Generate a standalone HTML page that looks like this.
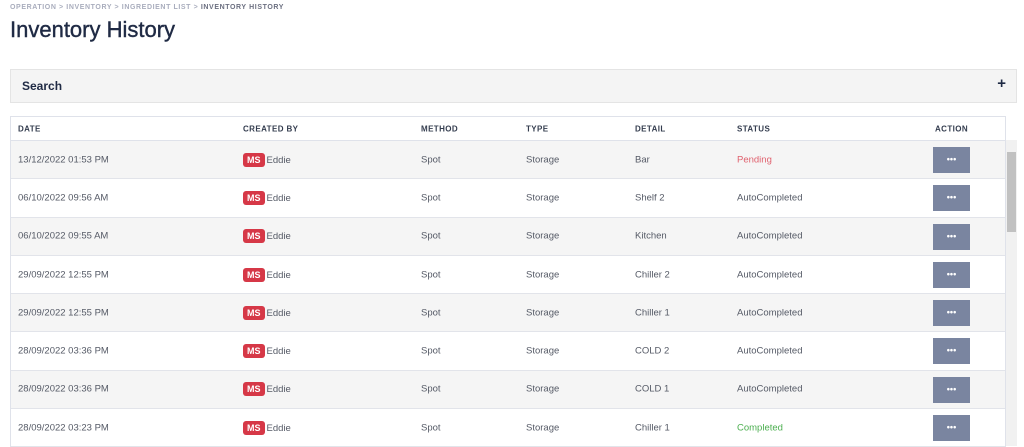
<!DOCTYPE html><html><head><style>
body{margin:0;width:1024px;height:446px;overflow:hidden;background:#fff;font-family:"Liberation Sans",sans-serif;color:#333;position:relative}
.bc{position:absolute;left:10px;top:4px;font-size:7px;font-weight:bold;letter-spacing:.6px;color:#a9adbd}
.bc b{color:#6b6f80}
h1{position:absolute;left:10px;top:17px;margin:0;font-size:22px;font-weight:normal;color:#1f2a44;-webkit-text-stroke:.4px #1f2a44}
.search{position:absolute;left:10px;top:69px;width:1005px;height:32px;background:#f4f4f4;border:1px solid #e4e4e4}
.search span{position:absolute;left:11px;top:9px;font-size:12px;font-weight:bold;color:#1f2a44}
.search i{position:absolute;right:10px;top:5px;font-style:normal;font-size:15px;font-weight:bold;color:#1f2a44}
.tbl{position:absolute;left:10px;top:116px;width:994px;border:1px solid #dfe2ea;border-bottom:none}
.hd{height:23px;border-bottom:1px solid #dfe2ea;position:relative;font-size:8px;font-weight:bold;letter-spacing:.4px;color:#333c4e}
.row{height:37.3px;border-bottom:1px solid #e2e4ea;position:relative;font-size:9.5px;color:#555a66}
.row:nth-child(even){background:#f5f5f5}
.c{position:absolute;top:50%;transform:translateY(-50%);white-space:nowrap}
.ms{display:inline-block;background:#d63847;color:#fff;font-weight:bold;font-size:9px;border-radius:3px;padding:2px 4px;margin-right:2px}
.btn{position:absolute;left:922px;top:6px;width:37px;height:26px;background:#7a85a0;color:#fff;font-size:9px;text-align:center;line-height:24px;font-weight:bold}
.sb{position:absolute;left:1006px;top:140px;width:11px;height:306px;background:#f1f1f1}
.sb div{position:absolute;left:1px;top:12px;width:9px;height:80px;background:#c1c1c1}
</style></head><body>
<div class="bc">OPERATION &gt; INVENTORY &gt; INGREDIENT LIST &gt; <b>INVENTORY HISTORY</b></div>
<h1>Inventory History</h1>
<div class="search"><span>Search</span><i>+</i></div>
<div class="tbl">
<div class="hd"><span class="c" style="left:7px">DATE</span><span class="c" style="left:232px">CREATED BY</span><span class="c" style="left:410px">METHOD</span><span class="c" style="left:515px">TYPE</span><span class="c" style="left:624px">DETAIL</span><span class="c" style="left:726px">STATUS</span><span class="c" style="left:924px">ACTION</span></div>
<div class="row"><span class="c" style="left:7px">13/12/2022 01:53 PM</span><span class="c" style="left:232px"><span class="ms">MS</span>Eddie</span><span class="c" style="left:410px">Spot</span><span class="c" style="left:515px">Storage</span><span class="c" style="left:624px">Bar</span><span class="c" style="left:726px;color:#e0626f">Pending</span><div class="btn">•••</div></div>
<div class="row"><span class="c" style="left:7px">06/10/2022 09:56 AM</span><span class="c" style="left:232px"><span class="ms">MS</span>Eddie</span><span class="c" style="left:410px">Spot</span><span class="c" style="left:515px">Storage</span><span class="c" style="left:624px">Shelf 2</span><span class="c" style="left:726px">AutoCompleted</span><div class="btn">•••</div></div>
<div class="row"><span class="c" style="left:7px">06/10/2022 09:55 AM</span><span class="c" style="left:232px"><span class="ms">MS</span>Eddie</span><span class="c" style="left:410px">Spot</span><span class="c" style="left:515px">Storage</span><span class="c" style="left:624px">Kitchen</span><span class="c" style="left:726px">AutoCompleted</span><div class="btn">•••</div></div>
<div class="row"><span class="c" style="left:7px">29/09/2022 12:55 PM</span><span class="c" style="left:232px"><span class="ms">MS</span>Eddie</span><span class="c" style="left:410px">Spot</span><span class="c" style="left:515px">Storage</span><span class="c" style="left:624px">Chiller 2</span><span class="c" style="left:726px">AutoCompleted</span><div class="btn">•••</div></div>
<div class="row"><span class="c" style="left:7px">29/09/2022 12:55 PM</span><span class="c" style="left:232px"><span class="ms">MS</span>Eddie</span><span class="c" style="left:410px">Spot</span><span class="c" style="left:515px">Storage</span><span class="c" style="left:624px">Chiller 1</span><span class="c" style="left:726px">AutoCompleted</span><div class="btn">•••</div></div>
<div class="row"><span class="c" style="left:7px">28/09/2022 03:36 PM</span><span class="c" style="left:232px"><span class="ms">MS</span>Eddie</span><span class="c" style="left:410px">Spot</span><span class="c" style="left:515px">Storage</span><span class="c" style="left:624px">COLD 2</span><span class="c" style="left:726px">AutoCompleted</span><div class="btn">•••</div></div>
<div class="row"><span class="c" style="left:7px">28/09/2022 03:36 PM</span><span class="c" style="left:232px"><span class="ms">MS</span>Eddie</span><span class="c" style="left:410px">Spot</span><span class="c" style="left:515px">Storage</span><span class="c" style="left:624px">COLD 1</span><span class="c" style="left:726px">AutoCompleted</span><div class="btn">•••</div></div>
<div class="row"><span class="c" style="left:7px">28/09/2022 03:23 PM</span><span class="c" style="left:232px"><span class="ms">MS</span>Eddie</span><span class="c" style="left:410px">Spot</span><span class="c" style="left:515px">Storage</span><span class="c" style="left:624px">Chiller 1</span><span class="c" style="left:726px;color:#4caf50">Completed</span><div class="btn">•••</div></div>
</div>
<div class="sb"><div></div></div>
</body></html>
